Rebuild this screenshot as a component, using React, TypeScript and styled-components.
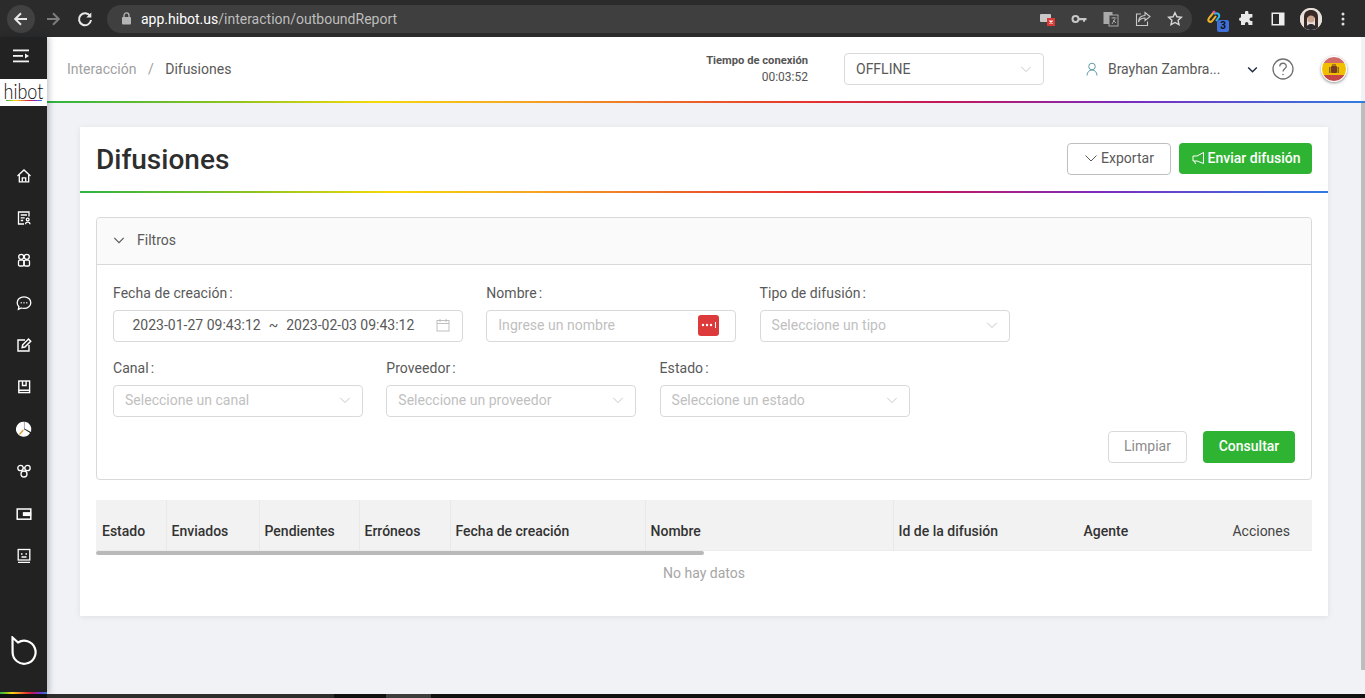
import React from 'react';
import styled, { createGlobalStyle } from 'styled-components';

const GRADIENT = 'linear-gradient(90deg,#2fb344 0%,#8fc31f 14%,#f5d90a 25%,#f5a623 36%,#e5322d 58%,#c2185b 68%,#7b2cbf 82%,#2f7de1 100%)';

const Global = createGlobalStyle`
  html, body { margin: 0; padding: 0; height: 698px; overflow: hidden; background: #000; }
  * { box-sizing: border-box; }
  body { font-family: Roboto, "Liberation Sans", sans-serif; font-size: 14px; }
`;
const Screen = styled.div`width:1365px;height:698px;display:flex;flex-direction:column;overflow:hidden;`;
const ChromeBar = styled.div`height:37px;background:#2b2b2b;display:flex;align-items:center;padding:0 0 0 7px;flex:none;`;
const NavBtn = styled.div<{ $active?: boolean }>`width:28px;height:28px;border-radius:50%;display:flex;align-items:center;justify-content:center;margin-right:4px;background:${p => p.$active ? '#414141' : 'transparent'};`;
const UrlPill = styled.div`width:1085px;height:28px;margin-left:4px;border-radius:14px;background:#3f3f3f;display:flex;align-items:center;padding-left:14px;padding-right:1px;font-size:14px;color:#bdbdbd;`;
const UrlHost = styled.span`color:#fff;margin-left:9px;`;
const Spacer = styled.div`flex:1;`;
const PillIcons = styled.div`display:flex;align-items:center;gap:0;`;
const ChromeIcon = styled.div<{ $w?: number; $ml?: number }>`width:${p => p.$w ?? 32}px;margin-left:${p => p.$ml ?? 0}px;height:24px;display:flex;align-items:center;justify-content:center;position:relative;`;
const Ext = styled.div`display:flex;align-items:center;`;
const Badge = styled.span`position:absolute;left:19px;top:13px;width:12px;height:12px;border-radius:2px;background:#3f6fd8;color:#111;font-size:10px;font-weight:700;line-height:12px;text-align:center;`;
const Avatar = styled.div`width:22px;height:22px;border-radius:50%;background:#e6dcd6;overflow:hidden;display:flex;`;

const Body = styled.div`flex:1;display:flex;min-height:0;`;
const Sidebar = styled.aside`width:47px;flex:none;background:#222;display:flex;flex-direction:column;align-items:center;position:relative;box-shadow:2px 0 6px rgba(0,21,41,.25);z-index:2;`;
const Burger = styled.div`height:42px;width:100%;display:flex;align-items:center;justify-content:flex-start;padding:0 0 4px 13px;`;
const LogoBox = styled.div`width:47px;height:27px;background:#fff;display:flex;flex-direction:column;align-items:center;justify-content:flex-start;padding-top:5px;`;
const LogoText = styled.span`font-family:Lato,"Liberation Sans",sans-serif;font-size:18px;line-height:15px;font-weight:300;color:#111;transform:scaleY(1.2);`;
const LogoLine = styled.div`width:36px;height:1px;background:${GRADIENT};margin-top:1px;`;
const Menu = styled.div`display:flex;flex-direction:column;align-items:center;margin-top:49px;gap:0;`;
const MenuItem = styled.div`height:42.2px;width:47px;display:flex;align-items:center;justify-content:center;`;
const BottomLogo = styled.div`margin-top:auto;margin-bottom:26px;`;
const SideLine = styled.div`position:absolute;left:0;right:0;bottom:0;height:2px;background:${GRADIENT};`;

const Main = styled.div`flex:1;min-width:0;display:flex;background:#f0f2f5;`;
const MainCol = styled.div`flex:1;min-width:0;display:flex;flex-direction:column;`;
const Scrollbar = styled.div`width:4px;flex:none;background:#f0f2f5;display:flex;flex-direction:column;`;
const ScrollThumb = styled.div`margin-top:66px;height:567px;background:#bdbdbd;`;
const Header = styled.header`height:66px;flex:none;background:#fff;position:relative;display:flex;align-items:center;padding:0 14px 2px 20px;`;
const HeaderLine = styled.div`position:absolute;left:0;right:-4px;bottom:0;height:2px;background:${GRADIENT};z-index:1;`;
const Crumb = styled.span<{ $current?: boolean }>`font-size:14px;color:${p => p.$current ? '#595959' : '#a0a0a0'};`;
const CrumbSep = styled.span`color:#a0a0a0;margin:0 11.5px;font-size:14px;`;
const Conn = styled.div`margin-left:auto;text-align:right;line-height:16px;`;
const ConnTitle = styled.div`font-size:11.2px;font-weight:700;color:#555;`;
const ConnTime = styled.div`font-size:12px;color:#555;`;
const StatusSelect = styled.div`width:200px;height:32px;margin-left:36px;border:1px solid #d9d9d9;border-radius:4px;display:flex;align-items:center;justify-content:space-between;padding:0 11px 1px 11px;font-size:14px;color:#595959;`;
const User = styled.div`display:flex;align-items:center;margin-left:41px;color:#595959;font-size:14px;`;
const UserName = styled.span`margin-left:9px;width:139px;letter-spacing:-.05px;`;
const Help = styled.div`margin-left:14px;width:22px;height:22px;`;
const Flag = styled.div`margin-left:27px;width:26px;height:26px;border-radius:50%;background:linear-gradient(#d36a6a 0 25%,#f1bf00 25% 75%,#c64545 75%);box-shadow:0 1px 3px rgba(0,0,0,.45);border:1px solid #fff;display:flex;align-items:center;justify-content:center;`;

const Content = styled.div`padding:24px 33px 0 33px;flex:1;min-height:0;`;
const Card = styled.section`height:489px;background:#fff;box-shadow:0 1px 6px rgba(0,0,0,.08);`;
const TitleRow = styled.div`height:64px;display:flex;align-items:center;padding:0 16px;`;
const Title = styled.h1`margin:0;font-size:28px;line-height:36px;font-weight:500;color:#2e2e2e;padding-top:1px;`;
const Actions = styled.div`margin-left:auto;display:flex;gap:8px;align-items:flex-start;margin-top:-1px;`;
const OutlineBtn = styled.button`height:32px;padding:0 0 2px;border:1px solid #bfbfbf;border-radius:4px;background:#fff;color:#595959;font:14px Roboto,sans-serif;display:flex;align-items:center;justify-content:center;gap:3px;`;
const ExportBtn = styled(OutlineBtn)`width:104px;`;
const ClearBtn = styled(OutlineBtn)`width:79px;border-color:#d9d9d9;color:#8c8c8c;`;
const GreenBtn = styled.button`height:31px;border:0;padding:0 0 2px;border-radius:4px;background:#2fb332;color:#fff;font:500 14px Roboto,sans-serif;display:flex;align-items:center;justify-content:center;gap:3px;`;
const SendBtn = styled(GreenBtn)`width:133px;padding-bottom:1px;`;
const QueryBtn = styled(GreenBtn)`width:92px;height:32px;`;
const CardLine = styled.div`height:2px;background:${GRADIENT};`;
const CardBody = styled.div`padding:24px 16px 0;`;
const Filters = styled.div`border:1px solid #d9d9d9;border-radius:4px;height:263px;`;
const FilterHead = styled.div`height:47px;background:#fafafa;border-bottom:1px solid #d9d9d9;border-radius:4px 4px 0 0;display:flex;align-items:center;padding:0 0 2px 16px;gap:12px;color:#595959;font-size:14px;`;
const FilterBody = styled.div`padding:16px;`;
const FormRow = styled.div`display:flex;gap:23.3px;height:75px;`;
const Field = styled.div<{ $w: number }>`width:${p => p.$w}px;flex:none;`;
const Label = styled.div`height:24px;line-height:24px;margin-bottom:5px;color:#595959;font-size:14px;letter-spacing:.05px;&::after{content:':';margin-left:2px;}`;
const InputBox = styled.div`height:32px;border:1px solid #d9d9d9;border-radius:4px;display:flex;align-items:center;justify-content:space-between;padding:0 11px 2px 11px;color:#bfbfbf;font-size:14px;letter-spacing:.02px;`;
const DateBox = styled(InputBox)`padding-left:18.5px;padding-right:12px;color:#595959;letter-spacing:0;`;
const NameBox = styled(InputBox)`padding-right:12px;`;
const DateSep = styled.span`margin:0 8px;`;
const RedDot = styled.div`width:21px;height:21px;border-radius:3px;background:#dd3b3b;margin-right:4px;display:flex;align-items:center;justify-content:center;`;
const FormActions = styled.div`display:flex;justify-content:flex-end;gap:16px;`;
const Table = styled.div`margin-top:20px;display:flex;height:51px;background:#f2f2f2;border-bottom:1px solid #ececec;`;
const Th = styled.div<{ $w: number; $last?: boolean }>`width:${p => p.$w}px;padding:23px 5px 0 4.5px;font-size:14px;font-weight:500;color:#333;border-right:${p => p.$last ? '0' : '1px solid #e8e8e8'};white-space:nowrap;&:first-child{padding-left:6px;}`;
const ThAction = styled(Th)`text-align:right;padding-right:22px;font-weight:400;color:#444;`;
const TableBar = styled.div`width:608px;height:4px;background:#b9b9b9;border-radius:2px;`;
const Empty = styled.div`width:1216px;text-align:center;padding-top:10px;font-size:14px;color:#a6a6a6;`;
const Taskbar = styled.div`height:4px;flex:none;background:#111;display:flex;`;
const TaskSeg = styled.div<{ $w: number; $c: string }>`width:${p => p.$w}px;background:${p => p.$c};flex:none;`;

const Chevron = ({ c = '#bfbfbf', s = 14, w = 1 }: { c?: string; s?: number; w?: number }) => (
  <svg width={s} height={s} viewBox="0 0 14 14" fill="none"><path d="M1.5 4.5 7 10l5.500-5.500" stroke={c} strokeWidth={w} /></svg>
);

const sideIcons: React.ReactNode[] = [
  <><path d="M1.500 8 8 2l6.500 6" /><path d="M3.300 6.800v7h9.400v-7" /><path d="M6.300 13.800V9.800h3.400v4" /></>,
  <><path d="M13 6.500V2H2.500v12H8" /><path d="M4.700 5h6.300M4.700 7.800h4M4.700 10.500h2.500" /><circle cx="11.700" cy="9.500" r="1.400" /><path d="M9.500 14.200c.2-2.700 4.200-2.700 4.500 0" /></>,
  <><circle cx="5.200" cy="4.800" r="2.500" /><circle cx="10.800" cy="4.800" r="2.500" /><rect x="2.500" y="8.200" width="5.300" height="5.800" rx="1.200" /><rect x="8.200" y="8.200" width="5.300" height="5.800" rx="1.200" /></>,
  <><path d="M8 1.800C4 1.800 1.200 4.500 1.200 7.700c0 1.500.6 2.900 1.700 3.900l-.5 2.700 2.900-1.300c.8.300 1.700.4 2.700.4 4 0 6.800-2.600 6.800-5.700S12 1.800 8 1.800Z" /><path d="M4.700 7.800h1M7.500 7.800h1M10.300 7.800h1" strokeWidth="1.600" /></>,
  <><path d="M9 3H2v11h11V8" strokeWidth="1.400" /><path d="M6.200 10.500l.5-2.700L12.500 2l2.200 2.200-5.800 5.800Z" strokeWidth="1.500" /></>,
  <><rect x="2.800" y="2" width="10.800" height="11.600" strokeWidth="1.400" /><path d="M6.500 2v4.500h3.600V2M2.800 11.200h10.800" strokeWidth="1.400" /></>,
  <><path d="M7.300 1.500v7l5.800 3.600A6.800 6.800 0 1 1 7.300 1.500Z" fill="#fff" /><path d="M9 1.500a6.800 6.800 0 0 1 5.500 8.500L9 7Z" fill="#fff" /><path d="M3.500 13.500 7.300 9" stroke="#e0a030" /></>,
  <><circle cx="4.500" cy="5" r="2.700" /><circle cx="11.500" cy="5" r="2.700" /><circle cx="8" cy="11" r="3" /><path d="M7.200 5h1.600" /></>,
  <><rect x="1.200" y="3" width="13.600" height="10.200" strokeWidth="1.500" /><rect x="7.500" y="6.800" width="7" height="2.600" fill="#fff" /></>,
  <><rect x="2.200" y="1.500" width="11.600" height="10.500" /><path d="M5 6h1.500M9.500 6H11M5.500 9h5M2 14.400h12" /></>,
];

const cols = [71, 93, 100, 91, 195, 248, 185, 131];
const heads = ['Estado', 'Enviados', 'Pendientes', 'Erróneos', 'Fecha de creación', 'Nombre', 'Id de la difusión', 'Agente'];

export default function App() {
  return (
    <Screen>
      <Global />
      <ChromeBar>
        <NavBtn $active>
          <svg width="18" height="18" viewBox="0 0 18 18" fill="none" stroke="#e8e8e8" strokeWidth="2"><path d="M15 9H3.500M9 3.200 3.200 9 9 14.800" /></svg>
        </NavBtn>
        <NavBtn>
          <svg width="18" height="18" viewBox="0 0 18 18" fill="none" stroke="#7c7c7c" strokeWidth="2"><path d="M3 9h11.500M9 3.200 14.800 9 9 14.800" /></svg>
        </NavBtn>
        <NavBtn>
          <svg width="18" height="18" viewBox="0 0 18 18" fill="none" stroke="#e8e8e8" strokeWidth="2"><path d="M14.200 6.200A6 6 0 1 0 15 10" /><path d="M15.300 2.600v5h-5Z" fill="#e8e8e8" stroke="none" /></svg>
        </NavBtn>
        <UrlPill>
          <svg width="11" height="13" viewBox="0 0 11 13"><rect x="1" y="5" width="9" height="7.500" rx="1" fill="#b5b5b5" /><path d="M3 5V3.400a2.500 2.500 0 0 1 5 0V5" fill="none" stroke="#b5b5b5" strokeWidth="1.300" /></svg>
          <UrlHost>app.hibot.us</UrlHost>/interaction/outboundReport
          <Spacer />
          <PillIcons>
            <ChromeIcon>
              <svg width="16" height="14" viewBox="0 0 16 14"><rect x="1" y="2" width="11" height="8" rx="1" fill="#c8c8c8" /><rect x="8" y="6" width="8" height="8" fill="#d93a35" /><path d="M10.500 8.500l3 3m0-3l-3 3" stroke="#fff" strokeWidth="1.200" /></svg>
            </ChromeIcon>
            <ChromeIcon>
              <svg width="16" height="16" viewBox="0 0 16 16"><circle cx="4.500" cy="8" r="3" fill="none" stroke="#c8c8c8" strokeWidth="2" /><path d="M7.500 7h8v2.200h-1.500v1.500h-2V9.200H7.500Z" fill="#c8c8c8" /></svg>
            </ChromeIcon>
            <ChromeIcon>
              <svg width="16" height="16" viewBox="0 0 16 16" fill="none" stroke="#a9a9a9"><rect x="1" y="1.500" width="8" height="11" fill="#a9a9a9" /><rect x="6" y="4" width="9" height="11" fill="#3f3f3f" /><path d="M8.500 7h5M11 6v1M9 13l3-5M10 9l3 3" /></svg>
            </ChromeIcon>
            <ChromeIcon>
              <svg width="16" height="16" viewBox="0 0 16 16" fill="none" stroke="#c8c8c8" strokeWidth="1.100"><path d="M10 1.500 15 5.500l-5 4V7C6.500 7 4.500 8.500 3.500 11c0-4 2.500-6.500 6.500-6.500Z" /><path d="M6 3H1.500v11.500h11V10.500" /></svg>
            </ChromeIcon>
            <ChromeIcon>
              <svg width="16" height="16" viewBox="0 0 16 16" fill="none" stroke="#d8d8d8" strokeWidth="1.400"><path d="m8 1.700 1.900 4.100 4.500.5-3.300 3 .9 4.400L8 11.500l-4 2.200.9-4.400-3.300-3 4.500-.5Z" /></svg>
            </ChromeIcon>
          </PillIcons>
        </UrlPill>
        <Ext>
          <ChromeIcon $w={36} $ml={6}>
            <svg width="20" height="20" viewBox="0 0 20 20" fill="none" strokeWidth="2"><path d="M8 3 3 9c-2 3 1 5 3 3l4-5" stroke="#f0b429" /><path d="M8 5c3-2 6 0 5 3l-3 4" stroke="#2db7e8" /><circle cx="8" cy="3" r="1.500" fill="#e94f9c" stroke="none" /></svg>
            <Badge>3</Badge>
          </ChromeIcon>
          <ChromeIcon $w={26}>
            <svg width="16" height="16" viewBox="0 0 16 16"><path d="M6 1.500a1.700 1.700 0 0 1 3.400 0V3h4v3.500h-1.200a1.700 1.700 0 0 0 0 3.400h1.200v4h-4v-1.200a1.700 1.700 0 0 0-3.400 0v1.200H2v-4h-.3a1.700 1.700 0 0 1 0-3.400H2V3h4Z" fill="#e8e8e8" /></svg>
          </ChromeIcon>
          <ChromeIcon $w={36}>
            <svg width="14" height="14" viewBox="0 0 14 14"><rect x="0.500" y="0.500" width="13" height="13" fill="#eee" /><rect x="2" y="2" width="6" height="10" fill="#2b2b2b" /></svg>
          </ChromeIcon>
          <ChromeIcon $w={30}>
            <Avatar>
              <svg width="22" height="22" viewBox="0 0 22 22"><rect width="22" height="22" fill="#e8e0da" /><path d="M4 22V9c0-5 3-7 7-7s7 2 7 7v13h-3V10l-4-2-4 2v12Z" fill="#3a2a26" /><circle cx="11" cy="11" r="3.600" fill="#c9a28e" /><path d="M6 22c0-4 2-6 5-6s5 2 5 6Z" fill="#2b2b30" /></svg>
            </Avatar>
          </ChromeIcon>
          <ChromeIcon $w={34}>
            <svg width="4" height="14" viewBox="0 0 4 14" fill="#e0e0e0"><circle cx="2" cy="2" r="1.500" /><circle cx="2" cy="7" r="1.500" /><circle cx="2" cy="12" r="1.500" /></svg>
          </ChromeIcon>
        </Ext>
      </ChromeBar>
      <Body>
        <Sidebar>
          <Burger>
            <svg width="16" height="14" viewBox="0 0 16 14" fill="#f2f2f2"><rect x="0" y="0.500" width="16" height="1.800" /><rect x="0" y="6" width="10" height="1.800" /><path d="M12 4.500 16 7l-4 2.500Z" /><rect x="0" y="11.500" width="16" height="1.800" /></svg>
          </Burger>
          <LogoBox>
            <LogoText>hibot</LogoText>
            <LogoLine />
          </LogoBox>
          <Menu>
            {sideIcons.map((ic, i) => (
              <MenuItem key={i}>
                <svg width="16" height="16" viewBox="0 0 16 16" fill="none" stroke="#fff" strokeWidth="1.300">{ic}</svg>
              </MenuItem>
            ))}
          </Menu>
          <BottomLogo>
            <svg width="26" height="29" viewBox="0 0 26 29" fill="none" stroke="#fff" strokeWidth="2.200"><path d="M1.500 1.500 7 6.500A11.500 11.500 0 1 1 1.600 16.500Z" /></svg>
          </BottomLogo>
          <SideLine />
        </Sidebar>
        <Main>
          <MainCol>
            <Header>
              <Crumb>Interacción</Crumb>
              <CrumbSep>/</CrumbSep>
              <Crumb $current>Difusiones</Crumb>
              <Conn>
                <ConnTitle>Tiempo de conexión</ConnTitle>
                <ConnTime>00:03:52</ConnTime>
              </Conn>
              <StatusSelect>OFFLINE<Chevron s={12} /></StatusSelect>
              <User>
                <svg width="14" height="14" viewBox="0 0 14 14" fill="none" stroke="#5f9aa5" strokeWidth="1"><circle cx="7" cy="4.500" r="3.300" /><path d="M2 13.500c.3-3.500 2-5.500 5-5.500s4.700 2 5 5.500" /></svg>
                <UserName>Brayhan Zambra...</UserName>
                <Chevron c="#1f2a44" s={11} w={1.800} />
              </User>
              <Help>
                <svg width="22" height="22" viewBox="0 0 22 22" fill="none" stroke="#707070" strokeWidth="1.300"><circle cx="11" cy="11" r="10" /><path d="M7.800 8.500c0-4.300 6.500-4.300 6.500-.3 0 2.500-3.300 2.500-3.300 5.300" /><circle cx="11" cy="16.500" r=".8" fill="#707070" stroke="none" /></svg>
              </Help>
              <Flag>
                <svg width="10" height="11" viewBox="0 0 10 11"><rect x="2" y="2" width="6" height="7" rx="1" fill="#7a3b22" /><rect x="0" y="3" width="1.500" height="6" fill="#8a6a20" /><rect x="8.500" y="3" width="1.500" height="6" fill="#8a6a20" /><rect x="3" y="0" width="4" height="2" fill="#a8791e" /></svg>
              </Flag>
              <HeaderLine />
            </Header>
            <Content>
              <Card>
                <TitleRow>
                  <Title>Difusiones</Title>
                  <Actions>
                    <ExportBtn><Chevron c="#595959" s={14} />Exportar</ExportBtn>
                    <SendBtn>
                      <svg width="14" height="14" viewBox="0 0 14 14" fill="none" stroke="#fff" strokeWidth="1"><path d="M12.500 1.500v11L6 10H2V5h4ZM3.500 10l1 3" /></svg>
                      Enviar difusión
                    </SendBtn>
                  </Actions>
                </TitleRow>
                <CardLine />
                <CardBody>
                  <Filters>
                    <FilterHead><Chevron c="#595959" s={12} w={1.400} />Filtros</FilterHead>
                    <FilterBody>
                      <FormRow>
                        <Field $w={350}>
                          <Label>Fecha de creación</Label>
                          <DateBox>
                            <span>2023-01-27 09:43:12<DateSep>~</DateSep>2023-02-03 09:43:12</span>
                            <svg width="14" height="14" viewBox="0 0 14 14" fill="none" stroke="#bfbfbf"><rect x="1" y="2.500" width="12" height="10.500" /><path d="M1 5.500h12M4 1v3M10 1v3" /></svg>
                          </DateBox>
                        </Field>
                        <Field $w={250}>
                          <Label>Nombre</Label>
                          <NameBox>Ingrese un nombre
                            <RedDot><svg width="16" height="6" viewBox="0 0 16 6" fill="#fff"><circle cx="2" cy="3" r="1.200" /><circle cx="6" cy="3" r="1.200" /><circle cx="10" cy="3" r="1.200" /><rect x="14" y="0" width="1" height="6" /></svg></RedDot>
                          </NameBox>
                        </Field>
                        <Field $w={250}>
                          <Label>Tipo de difusión</Label>
                          <InputBox>Seleccione un tipo<Chevron s={12} /></InputBox>
                        </Field>
                      </FormRow>
                      <FormRow>
                        <Field $w={250}>
                          <Label>Canal</Label>
                          <InputBox>Seleccione un canal<Chevron s={12} /></InputBox>
                        </Field>
                        <Field $w={250}>
                          <Label>Proveedor</Label>
                          <InputBox>Seleccione un proveedor<Chevron s={12} /></InputBox>
                        </Field>
                        <Field $w={250}>
                          <Label>Estado</Label>
                          <InputBox>Seleccione un estado<Chevron s={12} /></InputBox>
                        </Field>
                      </FormRow>
                      <FormActions>
                        <ClearBtn>Limpiar</ClearBtn>
                        <QueryBtn>Consultar</QueryBtn>
                      </FormActions>
                    </FilterBody>
                  </Filters>
                  <Table>
                    {heads.map((h, i) => <Th key={h} $w={cols[i]} $last={i >= 6}>{h}</Th>)}
                    <ThAction $w={102} $last>Acciones</ThAction>
                  </Table>
                  <TableBar />
                  <Empty>No hay datos</Empty>
                </CardBody>
              </Card>
            </Content>
          </MainCol>
          <Scrollbar><ScrollThumb /></Scrollbar>
        </Main>
      </Body>
      <Taskbar>
        <TaskSeg $w={47} $c="#111" />
        <TaskSeg $w={287} $c="#2e2e2e" />
        <TaskSeg $w={52} $c="#111" />
        <TaskSeg $w={45} $c="#3d3d3d" />
      </Taskbar>
    </Screen>
  );
}
